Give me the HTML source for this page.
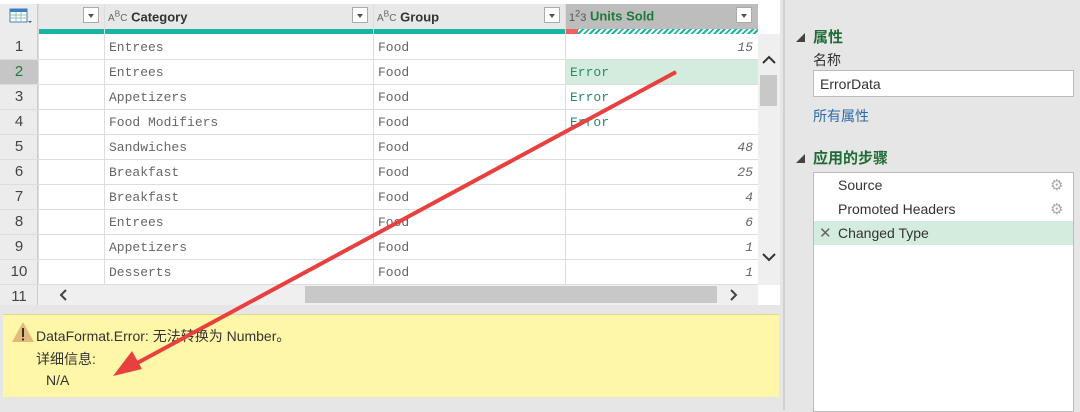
<!DOCTYPE html><html><head><meta charset="utf-8"><style>
*{margin:0;padding:0;box-sizing:border-box}
body{width:1080px;height:410px;overflow:hidden;background:#e6e6e6;font-family:"Liberation Sans","Noto Sans CJK SC",sans-serif;position:relative}
.a{position:absolute}
.mono{font-family:"Liberation Mono",monospace;font-size:13px;color:#666}
.rn{font-size:15px;color:#444;text-align:center;width:38px}
.dd{position:absolute;width:16px;height:16px;background:#fff;border:1px solid #aaa;top:7px}
.dd:after{content:"";position:absolute;left:4px;top:6px;border:3px solid transparent;border-top:4px solid #555}
</style></head><body>
<div class="a" style="left:0;top:0;width:780px;height:305px;background:#fff"></div>
<div class="a" style="left:0;top:4px;width:758px;height:26px;background:#e8e8e8;border-bottom:1px solid #ccc"></div>
<div class="a" style="left:565px;top:4px;width:193px;height:26px;background:#bdbdbd"></div>
<div class="a" style="left:38px;top:29px;width:527px;height:5px;background:#18b5a3"></div>
<div class="a" style="left:565px;top:29px;width:193px;height:5px;background:repeating-linear-gradient(135deg,#18b5a3 0 2px,#fff 2px 4px)"></div>
<div class="a" style="left:566px;top:29px;width:12px;height:5px;background:#f06060"></div>
<div class="a" style="left:0;top:4px;width:38px;height:301px;background:#ececec;border-right:1px solid #ccc"></div>
<svg class="a" style="left:9px;top:8px" width="24" height="18"><rect x="1" y="1" width="17" height="13" fill="#fff" stroke="#3f7fbf"/><rect x="1" y="1" width="17" height="3" fill="#3f7fbf"/><path d="M1 7H18M1 10H18M7 4V14M12 4V14" stroke="#9bb" /><path d="M19 13l2 2 2-2" fill="#555"/></svg>
<div class="dd" style="left:83px"></div><div class="dd" style="left:352px"></div><div class="dd" style="left:544px"></div><div class="dd" style="left:736px"></div>
<div class="a" style="left:108px;top:9px;font-size:13px;color:#333"><span style="font-size:10px;color:#666">A<sup>B</sup>C</span> <b>Category</b></div>
<div class="a" style="left:377px;top:9px;font-size:13px;color:#333"><span style="font-size:10px;color:#666">A<sup>B</sup>C</span> <b>Group</b></div>
<div class="a" style="left:569px;top:8px;font-size:13px;color:#1f7a3a"><span style="font-size:11px;color:#555">1<sup>2</sup>3</span> <b>Units Sold</b></div>
<div id="rows"></div>
<div class="a" style="left:38px;top:285px;width:720px;height:20px;background:#efefef"></div>
<div class="a" style="left:305px;top:286px;width:412px;height:17px;background:#c8c8c8"></div>
<svg class="a" style="left:58px;top:288px" width="12" height="14"><path d="M8 2L3 7L8 12" stroke="#444" stroke-width="2" fill="none"/></svg>
<svg class="a" style="left:727px;top:288px" width="12" height="14"><path d="M4 2L9 7L4 12" stroke="#444" stroke-width="2" fill="none"/></svg>
<div class="a" style="left:758px;top:34px;width:22px;height:251px;background:#efefef"></div>
<div class="a" style="left:760px;top:75px;width:17px;height:31px;background:#c8c8c8"></div>
<svg class="a" style="left:761px;top:54px" width="16" height="12"><path d="M2 9L8 3L14 9" stroke="#333" stroke-width="2" fill="none"/></svg>
<svg class="a" style="left:761px;top:251px" width="16" height="12"><path d="M2 3L8 9L14 3" stroke="#333" stroke-width="2" fill="none"/></svg>
<div class="a" style="left:0;top:305px;width:783px;height:105px;background:#e6e6e6"></div>
<div class="a" style="left:3px;top:314px;width:776px;height:83px;background:#fff7a8;border-top:1px solid #e0d890"></div>
<svg class="a" style="left:10px;top:319px" width="26" height="26"><path d="M13 3L24 23H2Z" fill="#e5b97a"/><rect x="12" y="9" width="2" height="9" fill="#333"/><rect x="12" y="19.5" width="2" height="2" fill="#333"/></svg>
<div class="a" style="left:36px;top:326px;font-size:14px;color:#333">DataFormat.Error: 无法转换为 Number。</div>
<div class="a" style="left:36px;top:349px;font-size:14px;color:#333">详细信息:</div>
<div class="a" style="left:46px;top:372px;font-size:14px;color:#333">N/A</div>
<div class="a" style="left:783px;top:0;width:2px;height:410px;background:#d0d0d0"></div>
<div class="a" style="left:796px;top:31px;font-size:9px;color:#444">◢</div>
<div class="a" style="left:813px;top:26px;font-size:15px;color:#1f6b35;font-weight:bold">属性</div>
<div class="a" style="left:813px;top:50px;font-size:14px;color:#333">名称</div>
<div class="a" style="left:813px;top:70px;width:261px;height:27px;background:#fff;border:1px solid #bbb;font-size:14px;color:#333;padding:5px 6px">ErrorData</div>
<div class="a" style="left:813px;top:106px;font-size:14px;color:#2e6aa8">所有属性</div>
<div class="a" style="left:796px;top:152px;font-size:9px;color:#444">◢</div>
<div class="a" style="left:813px;top:147px;font-size:15px;color:#1f6b35;font-weight:bold">应用的步骤</div>
<div class="a" style="left:813px;top:172px;width:261px;height:240px;background:#fff;border:1px solid #bbb"></div>
<div class="a" style="left:838px;top:177px;font-size:14px;color:#333">Source</div>
<div class="a" style="left:838px;top:201px;font-size:14px;color:#333">Promoted Headers</div>
<div class="a" style="left:1050px;top:176px;font-size:15px;color:#aaa">⚙</div>
<div class="a" style="left:1050px;top:200px;font-size:15px;color:#aaa">⚙</div>
<div class="a" style="left:814px;top:221px;width:259px;height:24px;background:#d4ecde"></div>
<div class="a" style="left:819px;top:224px;font-size:15px;color:#666">✕</div>
<div class="a" style="left:838px;top:225px;font-size:14px;color:#333">Changed Type</div>
<svg class="a" style="left:0;top:0" width="1080" height="410"><path d="M676 72L128 368" stroke="#e8403f" stroke-width="4"/><path d="M113 376L132 351L142 369Z" fill="#e8403f"/></svg>
<script>
var d=[["Entrees","15"],["Entrees","E"],["Appetizers","E"],["Food Modifiers","E"],["Sandwiches","48"],["Breakfast","25"],["Breakfast","4"],["Entrees","6"],["Appetizers","1"],["Desserts","1"]],h="";
d.forEach(function(r,i){var y=35+i*25;
h+='<div class="a" style="left:0;top:'+y+'px;width:758px;height:25px;border-bottom:1px solid #ddd"></div>';
if(i==1)h+='<div class="a" style="left:0;top:'+y+'px;width:38px;height:24px;background:#c6c6c6"></div><div class="a" style="left:566px;top:'+y+'px;width:192px;height:24px;background:#d4ecde"></div>';
h+='<div class="a rn" style="left:0;top:'+(y+3)+'px;'+(i==1?'color:#1f7a3a':'')+'">'+(i+1)+'</div>';
h+='<div class="a mono" style="left:109px;top:'+(y+5)+'px">'+r[0]+'</div><div class="a mono" style="left:378px;top:'+(y+5)+'px">Food</div>';
h+=r[1]=="E"?'<div class="a mono" style="left:570px;top:'+(y+5)+'px;color:#2a8a6a">Error</div>':'<div class="a mono" style="right:327px;top:'+(y+5)+'px;font-style:italic">'+r[1]+'</div>';});
h+='<div class="a rn" style="left:0;top:288px">11</div>';
[38,104,373,565].forEach(function(x){h+='<div class="a" style="left:'+x+'px;top:4px;width:1px;height:281px;background:#ddd"></div>'});
document.getElementById('rows').innerHTML=h;
</script>
</body></html>
